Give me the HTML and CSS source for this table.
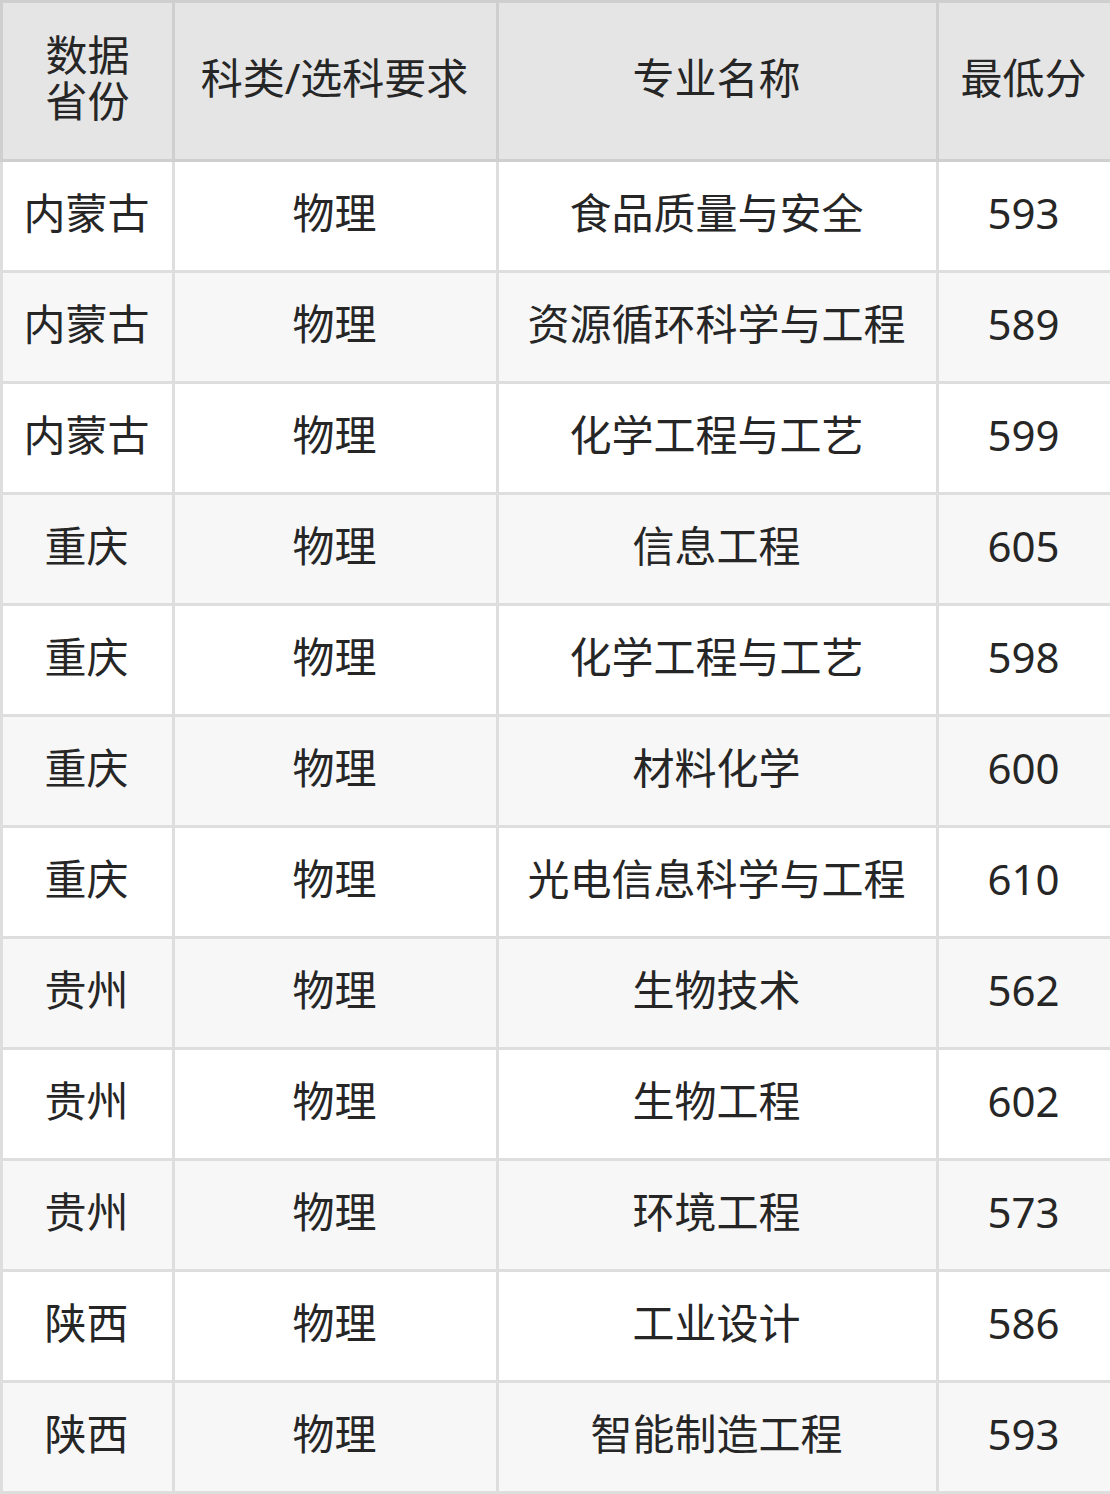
FILE: index.html
```html
<!DOCTYPE html>
<html lang="zh-CN">
<head>
<meta charset="utf-8">
<title>录取分数</title>
<link rel="stylesheet" href="styles.css">
</head>
<body>
<table class="score-table">
  <colgroup>
    <col class="c1"><col class="c2"><col class="c3"><col class="c4">
  </colgroup>
  <thead>
    <tr><th class="narrow">数据省份</th><th>科类/选科要求</th><th>专业名称</th><th>最低分</th></tr>
  </thead>
  <tbody>
    <tr><td>内蒙古</td><td>物理</td><td>食品质量与安全</td><td>593</td></tr>
    <tr><td>内蒙古</td><td>物理</td><td>资源循环科学与工程</td><td>589</td></tr>
    <tr><td>内蒙古</td><td>物理</td><td>化学工程与工艺</td><td>599</td></tr>
    <tr><td>重庆</td><td>物理</td><td>信息工程</td><td>605</td></tr>
    <tr><td>重庆</td><td>物理</td><td>化学工程与工艺</td><td>598</td></tr>
    <tr><td>重庆</td><td>物理</td><td>材料化学</td><td>600</td></tr>
    <tr><td>重庆</td><td>物理</td><td>光电信息科学与工程</td><td>610</td></tr>
    <tr><td>贵州</td><td>物理</td><td>生物技术</td><td>562</td></tr>
    <tr><td>贵州</td><td>物理</td><td>生物工程</td><td>602</td></tr>
    <tr><td>贵州</td><td>物理</td><td>环境工程</td><td>573</td></tr>
    <tr><td>陕西</td><td>物理</td><td>工业设计</td><td>586</td></tr>
    <tr><td>陕西</td><td>物理</td><td>智能制造工程</td><td>593</td></tr>
  </tbody>
</table>
</body>
</html>
```
FILE: styles.css
```css
html, body {
  margin: 0;
  padding: 0;
  background: #ffffff;
}
.score-table {
  width: 1110px;
  table-layout: fixed;
  border-collapse: collapse;
  font-family: "Noto Sans", "Noto Sans CJK SC", sans-serif;
  font-size: 42px;
  color: #262626;
}
.c1 { width: 172px; }
.c2 { width: 324px; }
.c3 { width: 440px; }
.c4 { width: 174px; }
.score-table th,
.score-table td {
  padding: 0 9px 6px 7px;
  text-align: center;
  vertical-align: middle;
  font-weight: normal;
}
.score-table th {
  background: #e5e5e5;
  border: 3px solid #cfcfcf;
  height: 150px;
  line-height: 46px;
}
.score-table th.narrow {
  padding: 0 36px 6px 36px;
}
.score-table td {
  border: 3px solid #dedede;
  height: 102px;
  line-height: 48px;
}
.score-table tbody tr:nth-child(odd) td { background: #ffffff; }
.score-table tbody tr:nth-child(even) td { background: #f7f7f7; }
```
